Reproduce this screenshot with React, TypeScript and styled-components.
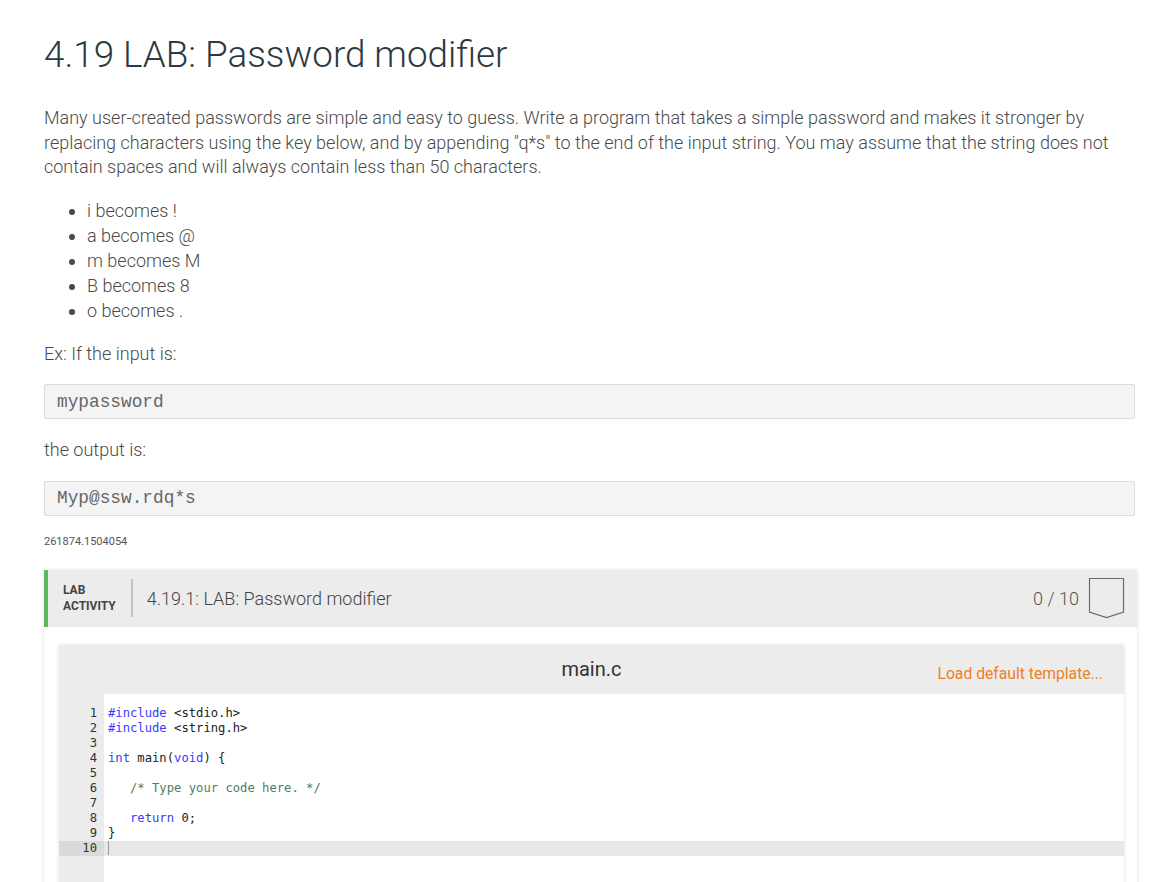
import styled, {createGlobalStyle} from 'styled-components';

const GlobalStyle = createGlobalStyle`
  body {
    margin: 0;
    background: #fff;
    font-family: Roboto, 'Noto Sans', sans-serif;
  }
`;

interface CodeLine {
  parts: {text: string; kind?: 'kw' | 'comment'}[];
}

const codeLines: CodeLine[] = [
  {parts: [{text: '#include', kind: 'kw'}, {text: ' <stdio.h>'}]},
  {parts: [{text: '#include', kind: 'kw'}, {text: ' <string.h>'}]},
  {parts: []},
  {parts: [{text: 'int', kind: 'kw'}, {text: ' main('}, {text: 'void', kind: 'kw'}, {text: ') {'}]},
  {parts: []},
  {parts: [{text: '   '}, {text: '/* Type your code here. */', kind: 'comment'}]},
  {parts: []},
  {parts: [{text: '   '}, {text: 'return', kind: 'kw'}, {text: ' 0;'}]},
  {parts: [{text: '}'}]},
  {parts: []},
];

const rules = ['i becomes !', 'a becomes @', 'm becomes M', 'B becomes 8', 'o becomes .'];

const App = () => {
  return (
    <Page>
      <GlobalStyle />
      <Title>4.19 LAB: Password modifier</Title>
      <Paragraph>
        Many user-created passwords are simple and easy to guess. Write a program that takes a
        simple password and makes it stronger by replacing characters using the key below, and by
        appending "q*s" to the end of the input string. You may assume that the string does not
        contain spaces and will always contain less than 50 characters.
      </Paragraph>
      <RuleList>
        {rules.map(rule => (
          <li key={rule}>{rule}</li>
        ))}
      </RuleList>
      <Paragraph>Ex: If the input is:</Paragraph>
      <Sample>mypassword</Sample>
      <Paragraph>the output is:</Paragraph>
      <Sample>Myp@ssw.rdq*s</Sample>
      <ContentId>261874.1504054</ContentId>

      <Card>
        <CardHeader>
          <ActivityLabel>
            LAB
            <br />
            ACTIVITY
          </ActivityLabel>
          <Divider />
          <CardTitle>4.19.1: LAB: Password modifier</CardTitle>
          <Score>0 / 10</Score>
          <Badge width="37" height="42" viewBox="0 0 37 42">
            <path d="M1.5 1.5 H35.5 V35 L18.5 40.5 L1.5 35 Z" fill="none" stroke="#6b6b6b" strokeWidth="1.2" />
          </Badge>
        </CardHeader>
        <CardBody>
          <Editor>
            <EditorHeader>
              <FileName>main.c</FileName>
              <LoadTemplate>Load default template...</LoadTemplate>
            </EditorHeader>
            <EditorBody>
              <Gutter>
                {codeLines.map((_, i) => (
                  <LineNumber key={i} active={i === codeLines.length - 1}>
                    {i + 1}
                  </LineNumber>
                ))}
              </Gutter>
              <CodeArea>
                {codeLines.map((line, i) => (
                  <CodeRow key={i} active={i === codeLines.length - 1}>
                    {line.parts.map((part, j) =>
                      part.kind === 'kw' ? (
                        <Keyword key={j}>{part.text}</Keyword>
                      ) : part.kind === 'comment' ? (
                        <Comment key={j}>{part.text}</Comment>
                      ) : (
                        <span key={j}>{part.text}</span>
                      ),
                    )}
                    {i === codeLines.length - 1 && <Cursor />}
                  </CodeRow>
                ))}
              </CodeArea>
            </EditorBody>
          </Editor>
        </CardBody>
      </Card>
    </Page>
  );
};

const Page = styled.div`
  padding: 31px 20px 0 44px;
  color: #555;
`;
const Title = styled.h1`
  margin: 0 0 27px;
  font-size: 36.8px;
  line-height: 48px;
  font-weight: 300;
  color: #2b3942;
`;
const Paragraph = styled.p`
  margin: 0 0 18px;
  font-size: 18px;
  line-height: 24.5px;
  font-weight: 300;
  color: #4a4a4a;
`;
const RuleList = styled.ul`
  margin: 0 0 19px;
  padding-left: 43px;
  font-size: 18px;
  line-height: 25px;
  font-weight: 300;
  color: #4a4a4a;
`;
const Sample = styled.div`
  height: 35px;
  box-sizing: border-box;
  margin-bottom: 19px;
  padding: 0 12px;
  display: flex;
  align-items: center;
  background: #f4f4f4;
  border: 1px solid #dcdcdc;
  border-radius: 2px;
  font-family: 'Liberation Mono', 'Courier New', monospace;
  font-size: 17.8px;
  color: #666;
`;
const ContentId = styled.div`
  font-size: 11px;
  line-height: 14px;
  color: #555;
  margin-bottom: 21px;
`;
const Card = styled.div`
  box-shadow: 0 0 4px rgba(0, 0, 0, 0.12);
  margin-right: -2px;
`;
const CardHeader = styled.div`
  height: 57px;
  display: flex;
  align-items: center;
  background: #ececec;
  border-left: 4px solid #5cb85c;
  padding: 0 12px 0 15px;
`;
const ActivityLabel = styled.div`
  font-size: 12px;
  line-height: 16px;
  font-weight: 700;
  color: #444;
`;
const Divider = styled.div`
  width: 2px;
  height: 38px;
  background: #c4c4c4;
  margin: 0 14px 0 15px;
`;
const CardTitle = styled.div`
  flex: 1;
  font-size: 18px;
  font-weight: 300;
  color: #444;
`;
const Score = styled.div`
  font-size: 18px;
  font-weight: 300;
  color: #555;
  margin-right: 9px;
`;
const Badge = styled.svg`
  display: block;
`;
const CardBody = styled.div`
  padding: 18px 13px 0 15px;
  background: #fff;
`;
const Editor = styled.div`
  box-shadow: 0 0 4px rgba(0, 0, 0, 0.12);
`;
const EditorHeader = styled.div`
  height: 49px;
  background: #ececec;
  position: relative;
  display: flex;
  align-items: center;
  justify-content: flex-end;
  padding: 0 21px;
`;
const FileName = styled.div`
  position: absolute;
  left: 0;
  right: 0;
  top: 12px;
  text-align: center;
  font-size: 20px;
  color: #333;
`;
const LoadTemplate = styled.div`
  position: relative;
  margin-top: 9px;
  font-size: 15.7px;
  color: #ee8122;
`;
const EditorBody = styled.div`
  display: flex;
  min-height: 200px;
  background: #fff;
  font-family: 'DejaVu Sans Mono', monospace;
  font-size: 12.2px;
`;
const Gutter = styled.div`
  width: 45px;
  background: #ececec;
  padding-top: 12px;
`;
const LineNumber = styled.div<{active: boolean}>`
  height: 15px;
  line-height: 15px;
  text-align: right;
  padding-right: 7px;
  color: #333;
  background: ${props => (props.active ? '#dadada' : 'transparent')};
`;
const CodeArea = styled.div`
  flex: 1;
  padding-top: 12px;
`;
const CodeRow = styled.div<{active: boolean}>`
  height: 15px;
  line-height: 15px;
  padding-left: 4px;
  white-space: pre;
  color: #222;
  display: flex;
  align-items: center;
  background: ${props => (props.active ? '#e8e8e8' : 'transparent')};
`;
const Keyword = styled.span`
  color: #3a3aff;
`;
const Comment = styled.span`
  color: #4e7d64;
`;
const Cursor = styled.span`
  width: 1px;
  height: 14px;
  background: #999;
`;

export default App;
